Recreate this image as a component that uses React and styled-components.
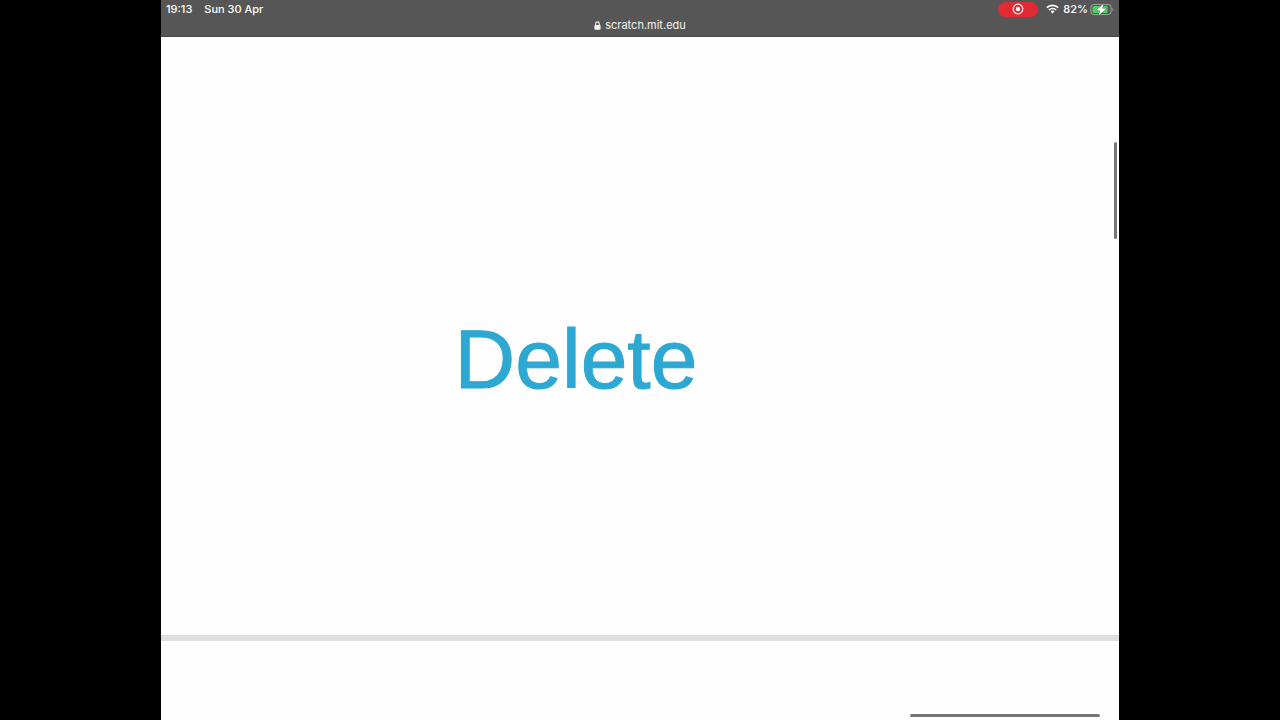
import React from "react";
import styled, { createGlobalStyle } from "styled-components";

const GlobalStyle = createGlobalStyle`
  * { box-sizing: border-box; }
  body {
    margin: 0;
    background: #000;
    font-family: Inter, "Liberation Sans", sans-serif;
  }
`;

const Stage = styled.div`
  display: flex;
  justify-content: center;
  min-height: 100vh;
  background: #000;
`;

const Screen = styled.div`
  position: relative;
  display: flex;
  flex-direction: column;
  width: calc(75% - 2px);
  background: #fefefe;
`;

const TopBar = styled.header`
  height: 37px;
  padding-top: 1px;
  background: #565656;
  border-bottom: 1px solid #484848;
  color: #fff;
  font-size: 11px;
  line-height: 16px;
`;

const StatusRow = styled.div`
  display: flex;
  justify-content: space-between;
  height: 16px;
  padding: 0 5px;
`;

const StatusGroup = styled.div`
  display: flex;
  align-items: center;
  gap: ${(p) => p.$gap}px;
  font-weight: 500;
`;

const RecordingButton = styled.button`
  display: flex;
  align-items: center;
  justify-content: center;
  width: 40px;
  height: 15px;
  margin-right: 4px;
  padding: 0;
  border: 0;
  border-radius: 8px;
  background: #e02b34;
`;

const Battery = styled.div`
  display: flex;
  align-items: center;
  gap: 2px;
`;

const Address = styled.div`
  display: flex;
  align-items: center;
  justify-content: center;
  gap: 4px;
  height: 16px;
`;

const SiteLink = styled.a`
  color: #f4f4f4;
  text-decoration: none;
`;

const Page = styled.main`
  display: flex;
  flex: 1;
  flex-direction: column;
`;

const Panel = styled.section`
  display: flex;
  flex: 1;
  align-items: center;
  justify-content: center;
  padding: 46px 128px 0 0;
`;

const NextPanel = styled.section`
  height: 79px;
  border-top: 6px solid #dfdfe0;
  box-sizing: content-box;
`;

const DeleteButton = styled.button`
  padding: 0;
  border: 0;
  background: none;
  color: #2da8d2;
  font-family: "Liberation Sans", Arial, sans-serif;
  font-size: 84px;
  line-height: 96px;
  -webkit-text-stroke: 1px #2da8d2;
`;

const ScrollThumb = styled.div`
  position: absolute;
  border-radius: 2px;
  background: #777;
`;

const VerticalThumb = styled(ScrollThumb)`
  top: 142px;
  right: 2px;
  width: 3px;
  height: 97px;
`;

const HorizontalThumb = styled(ScrollThumb)`
  right: 19px;
  bottom: 3px;
  width: 190px;
  height: 3px;
`;

const RecordIcon = () => (
  <svg width="12" height="12" viewBox="0 0 12 12" fill="none" aria-hidden="true">
    <circle cx="6" cy="6" r="4.8" stroke="#fff" strokeWidth="1.2" />
    <circle cx="6" cy="6" r="2.2" fill="#fff" />
  </svg>
);

const WifiIcon = () => (
  <svg width="13" height="10" viewBox="0 0 13 10" fill="none" stroke="#fff" aria-hidden="true">
    <path d="M.8 3.7a8.1 8.1 0 0 1 11.4 0" strokeWidth="1.7" />
    <path d="M2.9 6a5.1 5.1 0 0 1 7.2 0" strokeWidth="1.6" />
    <path d="M6.5 9.5 4.6 7.5a2.7 2.7 0 0 1 3.8 0Z" fill="#fff" stroke="none" />
  </svg>
);

const BatteryIcon = () => (
  <svg width="24" height="13" viewBox="0 0 24 13" fill="none" aria-hidden="true">
    <rect x=".9" y="1.4" width="20.2" height="10.2" rx="3" stroke="#a2a5a2" />
    <path d="M4 3h13.5v7H4a1.5 1.5 0 0 1-1.5-1.5v-4A1.5 1.5 0 0 1 4 3Z" fill="#45d65c" />
    <path d="M22.4 4.8c1.2.7 1.2 2.7 0 3.4Z" fill="#a2a5a2" />
    <path d="M13.8.6 6 7.6h4.2L8.4 12.6l8.2-7.2h-4.4Z" fill="#fff" stroke="#4d5a4e" strokeWidth="1" paintOrder="stroke" />
  </svg>
);

const LockIcon = () => (
  <svg width="7" height="9" viewBox="0 0 7 9" fill="none" aria-hidden="true">
    <path d="M1.7 4.4V2.7a1.8 1.8 0 0 1 3.6 0v1.7" stroke="#f4f4f4" strokeWidth="1.1" />
    <rect x=".4" y="3.9" width="6.2" height="4.8" rx=".8" fill="#f4f4f4" />
  </svg>
);

export default function App() {
  return (
    <Stage>
      <GlobalStyle />
      <Screen>
        <TopBar>
          <StatusRow>
            <StatusGroup $gap={12}>
              <span>19:13</span>
              <span>Sun 30 Apr</span>
            </StatusGroup>
            <StatusGroup $gap={4}>
              <RecordingButton type="button" aria-label="Screen recording">
                <RecordIcon />
              </RecordingButton>
              <WifiIcon />
              <Battery>
                <span>82%</span>
                <BatteryIcon />
              </Battery>
            </StatusGroup>
          </StatusRow>
          <Address>
            <LockIcon />
            <SiteLink href="https://scratch.mit.edu">scratch.mit.edu</SiteLink>
          </Address>
        </TopBar>
        <Page>
          <Panel>
            <DeleteButton type="button">Delete</DeleteButton>
          </Panel>
          <NextPanel />
        </Page>
        <VerticalThumb />
        <HorizontalThumb />
      </Screen>
    </Stage>
  );
}
